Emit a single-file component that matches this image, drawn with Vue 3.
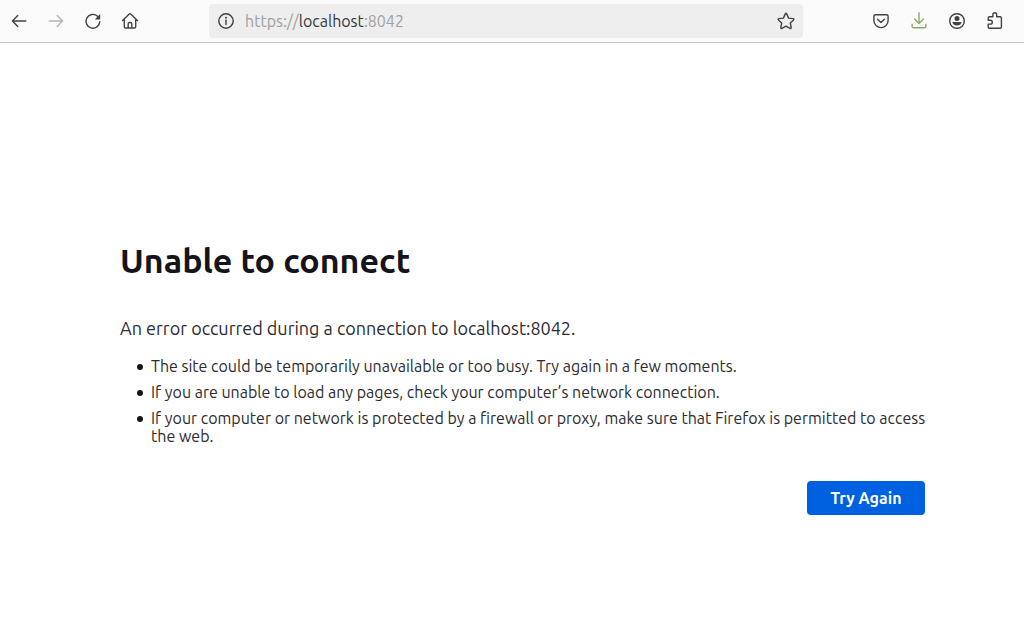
<script setup>
import { ref } from 'vue'

const scheme = 'https://'
const host = 'localhost'
const port = ':8042'
const url = ref(scheme + host + port)

const hints = [
  'The site could be temporarily unavailable or too busy. Try again in a few moments.',
  'If you are unable to load any pages, check your computer’s network connection.',
  'If your computer or network is protected by a firewall or proxy, make sure that Firefox is permitted to access the web.'
]
</script>

<template>
  <div class="browser">
    <header class="toolbar">
      <nav class="group" aria-label="Navigation">
        <button class="tool" type="button" aria-label="Back">
          <svg viewBox="0 0 18 18"><path d="M15.800 9H2.400M7.800 3.600L2.400 9l5.400 5.400" /></svg>
        </button>
        <button class="tool" type="button" aria-label="Forward" disabled>
          <svg viewBox="0 0 18 18"><path d="M2.200 9h13.400M10.200 3.600L15.600 9l-5.400 5.400" /></svg>
        </button>
        <button class="tool" type="button" aria-label="Reload">
          <svg viewBox="0 0 18 18">
            <path d="M15.800 9.600A6.900 6.900 0 1 1 13.600 4.200L15 5.500" />
            <path class="solid" d="M16.200 2v5.400h-5.400z" />
          </svg>
        </button>
        <button class="tool" type="button" aria-label="Home">
          <svg viewBox="0 0 18 18">
            <path d="M1.600 8.600L8 2.200q1-.9 2 0l6.400 6.400M3.300 7.500v7.300q0 1.200 1.200 1.200h9q1.200 0 1.200-1.200V7.500M7.200 16v-4.300q0-1.200 1.200-1.200h1.200q1.200 0 1.200 1.200V16" />
          </svg>
        </button>
      </nav>

      <form class="address" @submit.prevent>
        <button class="inset" type="button" aria-label="Site information">
          <svg viewBox="0 0 18 18">
            <circle cx="9" cy="9" r="7.200" />
            <path d="M9 8.200v4.400" />
            <circle class="solid" cx="9" cy="5.700" r="1" />
          </svg>
        </button>
        <div class="field">
          <input v-model="url" type="text" aria-label="Address" spellcheck="false" />
          <span class="tinted" aria-hidden="true">{{ scheme }}<b>{{ host }}</b>{{ port }}</span>
        </div>
        <button class="inset" type="button" aria-label="Bookmark this page">
          <svg viewBox="0 0 18 18">
            <path d="M8.300 1.900q.7-1.200 1.400 0l1.900 4.200 4.500.5q1.300.3.500 1.300l-3.300 3.100.9 4.500q0 1.300-1.200.9L9 14.100l-4 2.300q-1.200.4-1.200-.9l.9-4.500L1.400 7.900q-.8-1 .5-1.300l4.500-.5z" />
          </svg>
        </button>
      </form>

      <div class="group end">
        <button class="tool" type="button" aria-label="Save to Pocket">
          <svg viewBox="0 0 18 18">
            <path d="M3.400 2.800h11.200q1.500 0 1.500 1.500v4.200a7.100 7.100 0 0 1-14.200 0V4.300q0-1.500 1.500-1.500zM5.600 7.200L9 10.500l3.400-3.300" />
          </svg>
        </button>
        <button class="tool green" type="button" aria-label="Downloads">
          <svg viewBox="0 0 18 18">
            <path d="M9 .8v10.400M4.600 7L9 11.400 13.400 7M2.100 12.200v2q0 1.600 1.600 1.600h10.600q1.600 0 1.600-1.600v-2" />
          </svg>
        </button>
        <button class="tool" type="button" aria-label="Account">
          <svg viewBox="0 0 18 18">
            <circle cx="9" cy="9" r="7.300" />
            <circle class="solid" cx="9" cy="6.500" r="2.500" />
            <path class="solid" d="M4.800 10h8.400q.4 0 .3.500a4.600 3.800 0 0 1-9 0q-.1-.5.3-.5z" />
          </svg>
        </button>
        <button class="tool" type="button" aria-label="Extensions">
          <svg viewBox="0 0 18 18">
            <path d="M2.200 8.300V6q0-1.200 1.200-1.200h3.500V2.700a1.900 1.900 0 0 1 3.800 0v2.100h3.500q1.200 0 1.200 1.200v9q0 1.200-1.200 1.200H3.400q-1.200 0-1.200-1.200v-2.900h2.200a1.900 1.900 0 0 0 0-3.800z" />
          </svg>
        </button>
      </div>
    </header>

    <main class="page">
      <h1>Unable to connect</h1>
      <p>An error occurred during a connection to localhost:8042.</p>
      <ul>
        <li v-for="hint in hints" :key="hint">{{ hint }}</li>
      </ul>
      <div class="actions">
        <button class="retry" type="button">Try Again</button>
      </div>
    </main>
  </div>
</template>

<style>
body {
  margin: 0;
  background: #fff;
}
</style>

<style scoped>
.browser {
  font-family: Ubuntu, "Noto Sans", "Open Sans", sans-serif;
  color: #15141a;
}

.toolbar {
  display: flex;
  align-items: center;
  justify-content: space-between;
  height: 42px;
  padding: 0 20px 0 10px;
  background: #fbfbfb;
  border-bottom: 1px solid #c8c8c8;
}

.group {
  display: flex;
  gap: 19px;
}

.end {
  gap: 20px;
}

button {
  font: inherit;
  border: 0;
  cursor: pointer;
}

.tool,
.inset {
  display: flex;
  flex: none;
  padding: 0;
  background: none;
  color: #424245;
}

.tool:disabled {
  color: #b4b4b4;
}

.green {
  color: #8fa867;
}

svg {
  width: 18px;
  height: 18px;
  fill: none;
  stroke: currentColor;
  stroke-width: 1.4;
  stroke-linecap: round;
  stroke-linejoin: round;
}

.solid {
  fill: currentColor;
  stroke: none;
}

.address {
  display: flex;
  align-items: center;
  flex: 1;
  gap: 10px;
  box-sizing: border-box;
  height: 34px;
  margin: 0 69px 0 70px;
  padding: 0 8px;
  background: #eee;
  border-radius: 4px;
}

.field {
  position: relative;
  flex: 1;
  font-size: 16px;
  line-height: 24px;
}

.field input {
  display: block;
  box-sizing: border-box;
  width: 100%;
  height: 24px;
  padding: 0;
  font: inherit;
  color: transparent;
  background: none;
  border: 0;
  outline: 0;
}

.tinted {
  position: absolute;
  inset: 0;
  color: #a0a0a0;
  pointer-events: none;
}

.tinted b {
  font-weight: 400;
  color: #38383b;
}

.field input:focus {
  color: #38383b;
}

.field input:focus + .tinted {
  visibility: hidden;
}

.page {
  padding: 193px 93px 40px 120px;
}

h1 {
  margin: 0;
  font-size: 34px;
  font-weight: 600;
  line-height: 48px;
}

p {
  margin: 32px 0 0;
  font-size: 18px;
  line-height: 24px;
  color: #2c2b31;
}

ul {
  margin: 17px 0 0;
  padding: 0 0 0 17px;
  font-size: 16px;
  line-height: 18px;
  color: #2c2b31;
  list-style: none;
}

li {
  display: flex;
}

li::before {
  content: "";
  flex: none;
  width: 6px;
  height: 6px;
  margin: 7px 8px 0 0;
  background: #15141a;
  border-radius: 50%;
}

li + li {
  margin-top: 8px;
}

.actions {
  display: flex;
  justify-content: flex-end;
  margin-top: 36px;
  padding-right: 6px;
}

.retry {
  min-width: 118px;
  padding: 5px 20px;
  font-size: 16px;
  font-weight: 600;
  line-height: 24px;
  color: #fbfbfe;
  background: #0061e0;
  border-radius: 4px;
}
</style>
